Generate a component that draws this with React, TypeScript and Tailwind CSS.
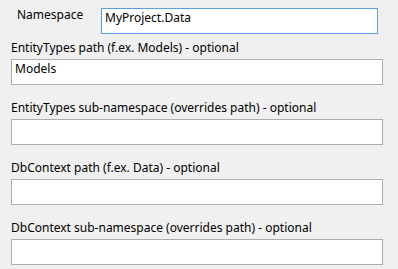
const FONT = "font-['Noto_Sans','Liberation_Sans',sans-serif]";

const FIELDS: { label: string; value: string }[] = [
  { label: "EntityTypes path (f.ex. Models) - optional", value: "Models" },
  { label: "EntityTypes sub-namespace (overrides path) - optional", value: "" },
  { label: "DbContext path (f.ex. Data) - optional", value: "" },
  { label: "DbContext sub-namespace (overrides path) - optional", value: "" },
];

function TextBox({ value, focused, className }: { value: string; focused?: boolean; className?: string }) {
  return (
    <div
      className={`h-[26px] bg-white border px-[3px] pt-[1px] text-[12px] leading-[16px] text-black ${
        focused ? "border-[#5a9fe4]" : "border-[#adadad]"
      } ${className ?? ""}`}
    >
      {value}
    </div>
  );
}

export default function App() {
  return (
    <div className={`w-[398px] h-[269px] bg-[#f0f0f0] text-black ${FONT}`}>
      {/* Namespace row */}
      <div className="flex items-start pt-[8px]">
        <div className="w-[101px] pl-[17px] pt-[-1px] text-[12px] leading-[16px] -mt-[1px]">Namespace</div>
        <TextBox value="MyProject.Data" focused className="w-[277px]" />
      </div>

      <div className="flex flex-col pl-[11px] pt-[6px]">
        {FIELDS.map((f, i) => (
          <div key={i} className={`flex flex-col ${i > 0 ? "mt-[15px]" : ""}`}>
            <div className="text-[12px] leading-[16px] mb-[3px]">{f.label}</div>
            <TextBox value={f.value} className="w-[372px]" />
          </div>
        ))}
      </div>
    </div>
  );
}
